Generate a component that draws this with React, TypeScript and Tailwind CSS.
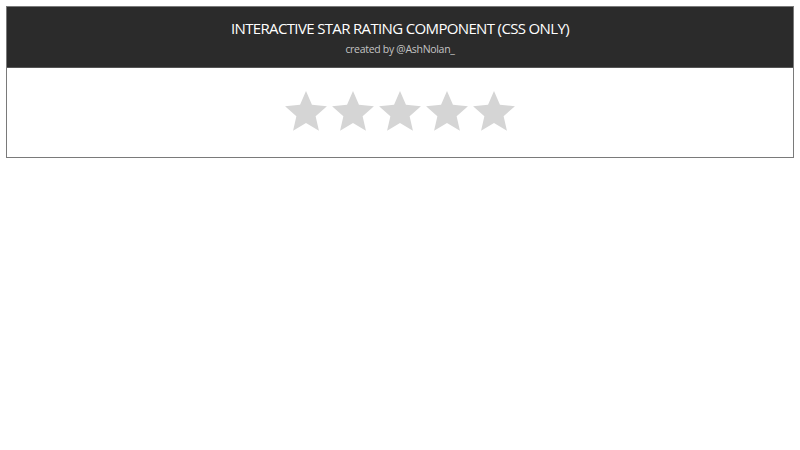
import React from "react";

// Five-point star with plump arms, drawn into a 42x40 box
function Star() {
  const cx = 21;
  const cy = 22;
  const R = 22;
  const r = R * 0.46;
  const pts: string[] = [];
  for (let i = 0; i < 10; i++) {
    const rad = i % 2 === 0 ? R : r;
    const a = -Math.PI / 2 + (i * Math.PI) / 5;
    pts.push(`${(cx + rad * Math.cos(a)).toFixed(2)},${(cy + rad * Math.sin(a)).toFixed(2)}`);
  }
  return (
    <svg width="42" height="40" viewBox="0 0 42 40" className="block">
      <polygon points={pts.join(" ")} fill="#d5d5d5" />
    </svg>
  );
}

export default function App() {
  return (
    <div className="min-h-[450px] w-[800px] bg-white p-[6px]" style={{ fontFamily: '"Open Sans", "Liberation Sans", sans-serif' }}>
      <div className="border border-[#7a7a7a]">
        <div className="flex h-[60px] flex-col items-center bg-[#2b2b2b] pt-[11px]">
          <h1 className="text-[15px] font-medium leading-[20px] tracking-[-0.65px] text-white">
            INTERACTIVE STAR RATING COMPONENT (CSS ONLY)
          </h1>
          <p className="mt-[4px] text-[10.5px] leading-[14px] tracking-[-0.3px] text-[#c4c4c4]">
            created by @AshNolan_
          </p>
        </div>
        <div className="flex h-[90px] items-center justify-center gap-[5px] border-t border-[#555] pb-[4px]">
          <Star />
          <Star />
          <Star />
          <Star />
          <Star />
        </div>
      </div>
    </div>
  );
}
